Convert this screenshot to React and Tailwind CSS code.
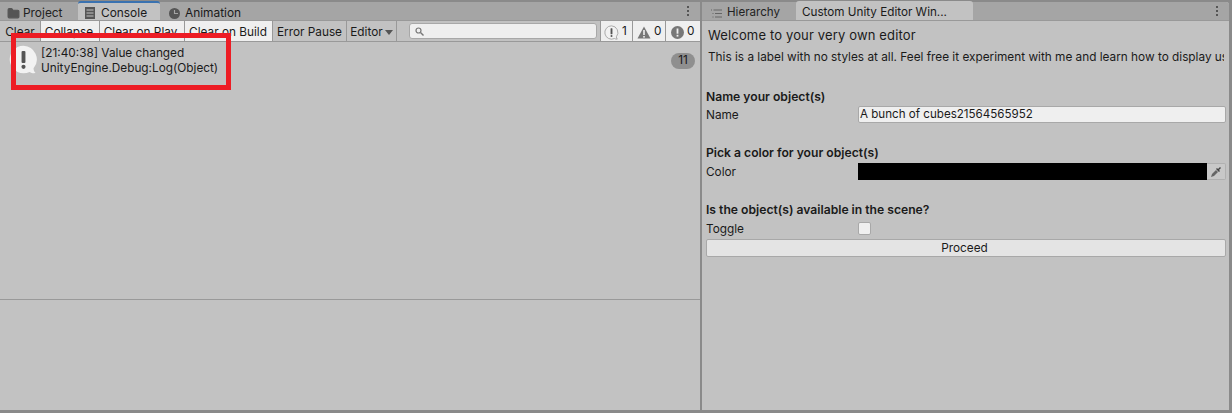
import React from "react";
import { Folder } from "lucide-react";

function InfoBubble({ size = 36, stroke = 6 }) {
  // speech bubble with an exclamation mark, used for the log rows and the counter
  return (
    <svg width={size} height={size} viewBox="0 0 36 36" className="shrink-0">
      <path
        d="M18 2a16 16 0 1 0 7 30.4c2 1.3 4.6 1.8 7 1.4-1.6-1.5-2.4-3.4-2.3-5.6A16 16 0 0 0 18 2z"
        fill="#f2f2f2"
        stroke={stroke ? "#9e9e9e" : "none"}
        strokeWidth={stroke ? 2 : 0}
      />
      <rect x="15.75" y="8" width="4.5" height="14" rx="1.2" fill="#555" />
      <circle cx="18" cy="26.5" r="2.4" fill="#555" />
    </svg>
  );
}

function ToolButton({ label, on, className }) {
  return (
    <div
      className={`flex items-center justify-center h-full pt-[3px] border-r border-[#999] ${
        on ? "bg-[#efefef]" : "bg-[#c2c2c2]"
      } ${className}`}
    >
      {label}
    </div>
  );
}

function Counter({ children, value, className }) {
  return (
    <div className={`flex items-center h-full pt-[2px] bg-[#efefef] border-r border-[#999] ${className}`}>
      {children}
      <span>{value}</span>
    </div>
  );
}

function Kebab() {
  return (
    <div className="flex flex-col self-center gap-[2px] ml-auto mr-[11px]">
      <div className="w-[2px] h-[2px] bg-[#555]" />
      <div className="w-[2px] h-[2px] bg-[#555]" />
      <div className="w-[2px] h-[2px] bg-[#555]" />
    </div>
  );
}

function Row({ label, children }) {
  return (
    <div className="flex items-center h-[19px]">
      <div className="w-[152px] shrink-0">{label}</div>
      {children}
    </div>
  );
}

export default function App() {
  return (
    <div
      className="relative flex w-[1232px] h-[413px] overflow-hidden bg-[#8a8a8a] pt-[2px] pr-[3px] pb-[3px] text-[11.8px] text-[#1a1a1a]"
      style={{ fontFamily: "Inter, 'Noto Sans', sans-serif" }}
    >
      {/* Panel izquierdo: consola */}
      <div className="flex flex-col w-[700px] shrink-0 bg-[#c2c2c2]">
        <div className="flex items-end h-[19px] bg-[#a5a5a5] border-b border-[#999] text-[11.9px]">
          <div className="flex items-center gap-[3px] w-[78px] h-full pl-[7px] pt-[4px] text-[#222]">
            <Folder size={13} fill="#555" stroke="#555" />
            Project
          </div>
          <div className="flex items-center gap-[6px] w-[82px] h-[19px] pl-[7px] pt-[3px] bg-[#c2c2c2] border-t-2 border-[#3a72b0] rounded-t-[3px]">
            <svg width="10" height="12" viewBox="0 0 10 12">
              <rect x="0" y="0" width="10" height="12" fill="#555" />
              <path d="M1.5 3h7M1.5 6h7M1.5 9h7" stroke="#c2c2c2" strokeWidth="1" />
            </svg>
            Console
          </div>
          <div className="flex items-center gap-[5px] h-full pl-[9px] pt-[4px]">
            <svg width="11" height="11" viewBox="0 0 11 11">
              <circle cx="5.5" cy="5.5" r="5.5" fill="#555" />
              <path d="M5.5 2v3.5H9" fill="none" stroke="#a5a5a5" strokeWidth="1.1" />
            </svg>
            Animation
          </div>
          <Kebab />
        </div>
        <div className="flex items-center h-[21px] border-b border-[#999] bg-[#c2c2c2]">
          <ToolButton label="Clear" className="w-[41px]" />
          <ToolButton label="Collapse" on className="w-[59px] pr-[2px]" />
          <ToolButton label="Clear on Play" on className="w-[85px] pr-[3px]" />
          <ToolButton label="Clear on Build" on className="w-[88px] pr-[1px]" />
          <ToolButton label="Error Pause" className="w-[74px]" />
          <ToolButton
            label={
              <span className="flex items-center gap-[2px]">
                Editor
                <span className="w-0 h-0 border-x-[4px] border-t-[5px] border-x-transparent border-t-[#555]" />
              </span>
            }
            className="w-[50px]"
          />
          <div className="flex items-center w-[188px] h-[16px] ml-[12px] mr-[3px] pl-[5px] bg-[#efefef] border border-[#a8a8a8] rounded-[3px]">
            <svg width="9" height="9" viewBox="0 0 9 9">
              <circle cx="3.5" cy="3.5" r="2.5" fill="none" stroke="#777" strokeWidth="1.2" />
              <path d="M5.5 5.5L8.5 8.5" stroke="#777" strokeWidth="1.4" />
            </svg>
          </div>
          <Counter value="1" className="w-[33px] pl-[3px] gap-[3px] border-l">
            <InfoBubble size={15} />
          </Counter>
          <Counter value="0" className="w-[33px] pl-[4px] gap-[3px]">
            <svg width="14" height="13" viewBox="0 0 14 13">
              <path d="M7 0.5L13.5 12.5H0.5z" fill="#777" />
              <rect x="6.2" y="4" width="1.6" height="5" fill="#efefef" />
              <rect x="6.2" y="10" width="1.6" height="1.6" fill="#efefef" />
            </svg>
          </Counter>
          <Counter value="0" className="flex-1 pl-[5px] gap-[3px] border-r-0">
            <svg width="13" height="13" viewBox="0 0 13 13">
              <circle cx="6.5" cy="6.5" r="6.5" fill="#777" />
              <rect x="5.6" y="2.5" width="1.8" height="5.2" fill="#efefef" />
              <rect x="5.6" y="8.8" width="1.8" height="1.8" fill="#efefef" />
            </svg>
          </Counter>
        </div>
        <div className="flex items-start h-[258px] pl-[8px] pr-[5px] pt-[2px] border-b border-[#999]">
          <div className="mr-[2px]">
            <InfoBubble size={31} stroke={0} />
          </div>
          <div className="pt-[2px] leading-[15px]">
            <div>[21:40:38] Value changed</div>
            <div>UnityEngine.Debug:Log(Object)</div>
          </div>
          <div className="flex items-center justify-center ml-auto mt-[9px] w-[24px] h-[16px] rounded-full bg-[#8f8f8f]">
            11
          </div>
        </div>
        <div className="flex-1" />
      </div>

      <div className="w-[2px] shrink-0" />

      {/* Panel derecho: ventana personalizada */}
      <div className="flex flex-col flex-1 min-w-0 bg-[#c2c2c2] rounded-tr-[3px]">
        <div className="flex items-end h-[19px] bg-[#a5a5a5] border-b border-[#999] rounded-tr-[3px]">
          <div className="flex items-center gap-[5px] w-[94px] h-full pl-[9px] pt-[4px] text-[11.6px] text-[#222]">
            <svg width="11" height="9" viewBox="0 0 11 9">
              <path d="M0 1h1M2.5 1H11M1.5 4.5h1M4 4.5h7M1.5 8h1M4 8h7" stroke="#666" strokeWidth="1" />
            </svg>
            Hierarchy
          </div>
          <div className="flex items-center w-[177px] h-[19px] pl-[6px] pt-[4px] text-[11.7px] bg-[#c2c2c2] rounded-t-[3px]">
            Custom Unity Editor Win...
          </div>
          <Kebab />
        </div>
        <div className="flex flex-col flex-1 pl-[4px] pr-[3px] pt-[4px]">
          <div className="pl-[2px] h-[20px] leading-[20px] text-[13px] tracking-[0.15px]">
            Welcome to your very own editor
          </div>
          <div className="ml-[2px] mr-[2px] mt-[2px] leading-[20px] whitespace-nowrap overflow-hidden">
            This is a label with no styles at all. Feel free it experiment with me and learn how to display us
          </div>
          <div className="mt-[21px] h-[18px] leading-[17px] font-semibold text-[12.15px]">Name your object(s)</div>
          <Row label="Name">
            <div className="flex-1 self-start h-[17px] leading-[15px] pl-[1px] text-[11.6px] bg-[#efefef] border border-[#a8a8a8] rounded-[2px]">
              A bunch of cubes21564565952
            </div>
          </Row>
          <div className="mt-[19px] h-[19px] leading-[17px] font-semibold text-[12.15px]">
            Pick a color for your object(s)
          </div>
          <Row label="Color">
            <div className="flex flex-1 self-start h-[17px]">
              <div className="flex-1 bg-black" />
              <div className="flex items-center justify-center w-[19px] bg-[#c8c8c8] border border-l-0 border-[#b0b0b0] rounded-r-[2px]">
                <svg width="12" height="12" viewBox="0 0 12 12">
                  <path d="M1 11l1-3 4-4 2 2-4 4z" fill="#666" />
                  <path d="M6 3l3 3 1-1-1-1 2-2-1-1-2 2-1-1z" fill="#444" />
                </svg>
              </div>
            </div>
          </Row>
          <div className="mt-[19px] h-[19px] leading-[17px] font-semibold text-[12.15px]">
            Is the object(s) available in the scene?
          </div>
          <Row label="Toggle">
            <div className="self-start mt-[2px] w-[13px] h-[13px] bg-[#efefef] border border-[#a8a8a8] rounded-[2px]" />
          </Row>
          <div className="flex items-center justify-center h-[18px] pt-[1px] pr-[3px] bg-[#e4e4e4] border border-[#a8a8a8] rounded-[2px]">
            Proceed
          </div>
        </div>
      </div>

      {/* Recuadro rojo puesto encima de la captura */}
      <div className="absolute left-[11px] top-[33px] w-[220px] h-[57px] border-[5px] border-[#ed1c24]" />
    </div>
  );
}
